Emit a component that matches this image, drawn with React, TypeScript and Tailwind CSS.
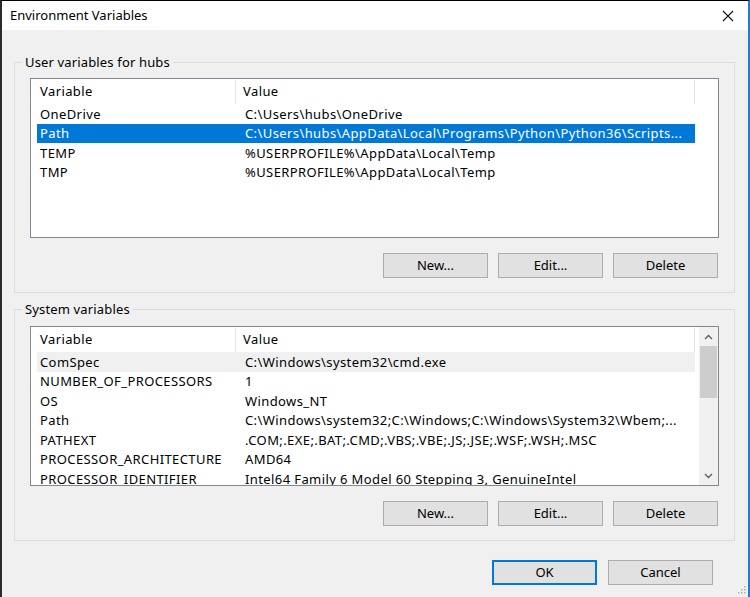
import React from 'react'

type Row = { name: string; value: string }

const userVars: Row[] = [
  { name: 'OneDrive', value: 'C:\\Users\\hubs\\OneDrive' },
  { name: 'Path', value: 'C:\\Users\\hubs\\AppData\\Local\\Programs\\Python\\Python36\\Scripts...' },
  { name: 'TEMP', value: '%USERPROFILE%\\AppData\\Local\\Temp' },
  { name: 'TMP', value: '%USERPROFILE%\\AppData\\Local\\Temp' },
]

const systemVars: Row[] = [
  { name: 'ComSpec', value: 'C:\\Windows\\system32\\cmd.exe' },
  { name: 'NUMBER_OF_PROCESSORS', value: '1' },
  { name: 'OS', value: 'Windows_NT' },
  { name: 'Path', value: 'C:\\Windows\\system32;C:\\Windows;C:\\Windows\\System32\\Wbem;...' },
  { name: 'PATHEXT', value: '.COM;.EXE;.BAT;.CMD;.VBS;.VBE;.JS;.JSE;.WSF;.WSH;.MSC' },
  { name: 'PROCESSOR_ARCHITECTURE', value: 'AMD64' },
  { name: 'PROCESSOR_IDENTIFIER', value: 'Intel64 Family 6 Model 60 Stepping 3, GenuineIntel' },
]

function Button({ label, primary }: { label: string; primary?: boolean }) {
  return (
    <button
      className={
        'w-[105px] h-[25px] bg-[#e1e1e1] text-black text-[13px] leading-none ' +
        (primary ? 'border-2 border-[#0078d7]' : 'border border-[#adadad]')
      }
    >
      {label}
    </button>
  )
}

function ListView({
  rows,
  selected,
  selectedStyle,
  scroll,
}: {
  rows: Row[]
  selected: number
  selectedStyle: 'active' | 'inactive'
  scroll?: boolean
}) {
  return (
    <div className="relative w-[689px] h-[160px] border border-[#828790] bg-white overflow-hidden text-[13px] tracking-[0.4px]">
      <div className="flex h-[25px] items-center pt-[1px]">
        <div className="w-[205px] h-full pl-[9px] flex items-center border-r border-[#e5e5e5]">
          Variable
        </div>
        <div className="w-[459px] h-full pl-[7px] flex items-center border-r border-[#e5e5e5]">
          Value
        </div>
      </div>
      <div className="ml-[6px] w-[658px]">
        {rows.map((r, i) => {
          const sel = i === selected
          const bg = sel
            ? selectedStyle === 'active'
              ? 'bg-[#0078d7] text-white'
              : 'bg-[#f0f0f0]'
            : ''
          return (
            <div key={r.name + i} className={'flex h-[19.5px] items-center whitespace-nowrap pt-[1px] ' + bg}>
              <div className="w-[204px] pl-[3px] shrink-0">{r.name}</div>
              <div className="pl-[4px]">{r.value}</div>
            </div>
          )
        })}
      </div>
      {scroll && (
        <div className="absolute right-0 top-0 bottom-0 w-[19px] bg-[#f0f0f0] flex flex-col items-center">
          <div className="h-[19px] w-full flex items-center justify-center">
            <svg width="9" height="6" viewBox="0 0 9 6">
              <path d="M1 5 L4.5 1.5 L8 5" stroke="#606060" strokeWidth="1.4" fill="none" />
            </svg>
          </div>
          <div className="w-[17px] h-[52px] bg-[#cdcdcd]" />
          <div className="flex-1" />
          <div className="h-[19px] w-full flex items-center justify-center">
            <svg width="9" height="6" viewBox="0 0 9 6">
              <path d="M1 1 L4.5 4.5 L8 1" stroke="#606060" strokeWidth="1.4" fill="none" />
            </svg>
          </div>
        </div>
      )}
    </div>
  )
}

function Group({
  title,
  children,
  top,
}: {
  title: string
  children: React.ReactNode
  top: string
}) {
  return (
    <fieldset className={'ml-[12px] w-[720px] border border-[#dcdcdc] px-[15px] pb-[14px] ' + top}>
      <legend className="ml-[-8px] px-[3px] leading-[16px] text-[13px] tracking-[0.15px]">{title}</legend>
      {children}
    </fieldset>
  )
}

function ButtonRow() {
  return (
    <div className="flex justify-end gap-[10px] mt-[15px] pr-[1px]">
      <Button label="New..." />
      <Button label="Edit..." />
      <Button label="Delete" />
    </div>
  )
}

export default function App() {
  return (
    <div
      className="w-[750px] h-[597px] bg-[#f0f0f0] border-t border-t-black border-l-2 border-l-[#2b2b2b] border-r-2 border-r-[#1c7ed6] text-[12px] text-black relative overflow-hidden"
      style={{ fontFamily: '"Noto Sans", "Open Sans", sans-serif' }}
    >
      <div className="h-[29px] bg-white flex items-center justify-between pl-[8px] pr-[14px]">
        <span className="text-[13px]">Environment Variables</span>
        <svg width="12" height="12" viewBox="0 0 12 12">
          <path d="M1 1 L11 11 M11 1 L1 11" stroke="#111" strokeWidth="1.1" />
        </svg>
      </div>

      <Group title="User variables for hubs" top="mt-[24px] pt-[8px]">
        <ListView rows={userVars} selected={1} selectedStyle="active" />
        <ButtonRow />
      </Group>

      <Group title="System variables" top="mt-[8px] pt-[9px]">
        <ListView rows={systemVars} selected={0} selectedStyle="inactive" scroll />
        <ButtonRow />
      </Group>

      <div className="flex justify-end gap-[11px] mt-[19px] pr-[35px]">
        <Button label="OK" primary />
        <Button label="Cancel" />
      </div>

      <svg className="absolute right-[2px] bottom-[3px]" width="10" height="10" viewBox="0 0 10 10">
        <rect x="8" y="2" width="1.5" height="1.5" fill="#b0b0b0" />
        <rect x="5" y="5" width="1.5" height="1.5" fill="#b0b0b0" />
        <rect x="8" y="5" width="1.5" height="1.5" fill="#b0b0b0" />
        <rect x="2" y="8" width="1.5" height="1.5" fill="#b0b0b0" />
        <rect x="5" y="8" width="1.5" height="1.5" fill="#b0b0b0" />
        <rect x="8" y="8" width="1.5" height="1.5" fill="#b0b0b0" />
      </svg>
    </div>
  )
}
